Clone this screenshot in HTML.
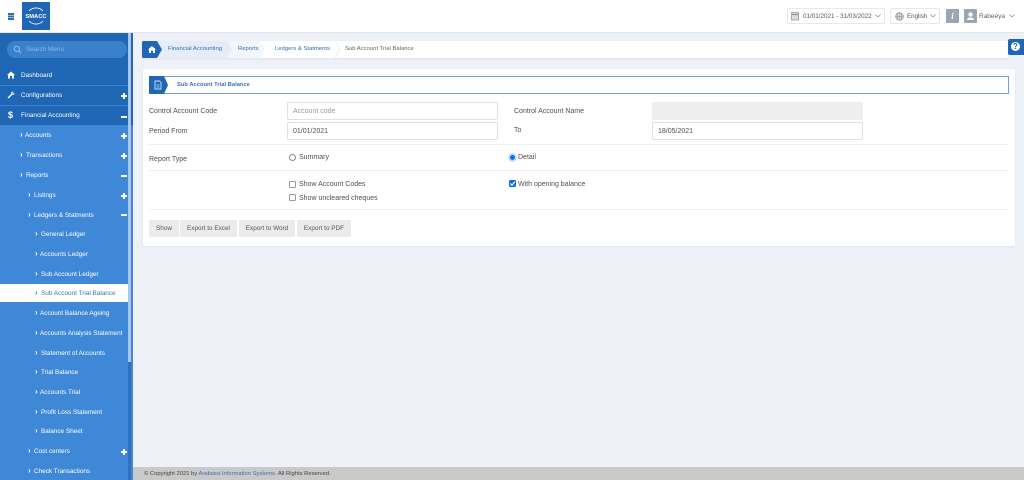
<!DOCTYPE html>
<html><head><meta charset="utf-8"><style>
*{box-sizing:border-box}
html,body{margin:0;padding:0;width:1024px;height:480px;overflow:hidden;background:#eef1f7;font-family:"Liberation Sans",sans-serif}
#w{position:absolute;left:0;top:0;width:1024px;height:480px;overflow:hidden;filter:blur(.3px)}
.a{position:absolute}
.t{position:absolute;white-space:nowrap;line-height:14px}
.side{color:#fff;font-size:6.4px}
.c{color:#fff;font-size:8px;font-weight:700}
.lab{color:#505050;font-size:7px;margin-top:1px}
.inp{position:absolute;background:#fff;border:1px solid #e0e0e0;border-radius:2px;height:18px;font-size:7px;color:#505050;line-height:17px;padding-left:5px}
.btn{position:absolute;top:220px;height:17px;background:#ebebeb;color:#555;font-size:6.4px;line-height:17px;text-align:center;border-radius:1px}
.hr{position:absolute;left:149px;width:860px;height:1px;background:#f0f0f0}
.div{position:absolute;left:0;width:128px;height:1px;background:#3b80cc}
.pm{position:absolute;left:121px;width:6px;height:2px;background:#fff}
.pv{position:absolute;left:123px;width:2px;height:6px;background:#fff}
.cb{position:absolute;width:7px;height:7px;border:1px solid #999;border-radius:1.5px;background:#fff}
.bc{position:absolute;white-space:nowrap;line-height:14px;font-size:5.9px;color:#2f6fb4}
</style></head><body><div id="w">
<div class="a" style="left:0;top:0;width:1024px;height:33px;background:#fff;border-bottom:1px solid #e3e6ee"></div>
<div class="a" style="left:8px;top:13px;width:6px;height:1.5px;background:#2b6cb5;box-shadow:0 2.5px 0 #2b6cb5,0 5px 0 #2b6cb5"></div>
<div class="a" style="left:22px;top:2px;width:28px;height:28px;background:#1f67b5"></div>
<svg class="a" style="left:22px;top:2px" width="28" height="28"><path d="M7 9A9.500 9.500 0 0 1 21 9M7 19A9.500 9.500 0 0 0 21 19" fill="none" stroke="#fff" stroke-width=".8"/><text x="14" y="16.200" text-anchor="middle" font-family="Liberation Sans" font-size="5.800" font-weight="700" fill="#fff">SMACC</text></svg>

<div class="a" style="left:787px;top:8px;width:98px;height:16px;background:#fff;border:1px solid #e8e8e8;border-radius:2px"></div>
<svg class="a" style="left:791px;top:11px" width="9" height="10"><rect x=".5" y="1.500" width="7" height="7.500" fill="#ddd" stroke="#999" stroke-width=".8"/><path d="M1 3.500H7" stroke="#888"/></svg>
<div class="t" style="left:803px;top:9.500px;font-size:6.300px;color:#555">01/01/2021 - 31/03/2022</div>
<svg class="a" style="left:875px;top:14px" width="6" height="4"><path d="M.5 .5L3 3 5.500 .5" fill="none" stroke="#888" stroke-width=".7"/></svg>
<div class="a" style="left:890px;top:8px;width:50px;height:16px;background:#fff;border:1px solid #e8e8e8;border-radius:2px"></div>
<svg class="a" style="left:895px;top:12px" width="9" height="9"><circle cx="4.500" cy="4.500" r="3.800" fill="#ddd" stroke="#888" stroke-width=".7"/><path d="M.7 4.500H8.300M4.500 .7V8.300M2.800 1.200Q1.800 4.500 2.800 7.800M6.200 1.200Q7.200 4.500 6.200 7.800" fill="none" stroke="#888" stroke-width=".5"/></svg>
<div class="t" style="left:907px;top:9.500px;font-size:6.200px;color:#555">English</div>
<svg class="a" style="left:930px;top:14px" width="6" height="4"><path d="M.5 .5L3 3 5.500 .5" fill="none" stroke="#888" stroke-width=".7"/></svg>
<div class="a" style="left:946px;top:9px;width:13px;height:14px;background:#9ba6b5;border-radius:1px;color:#fff;font:italic 700 9px/14px 'Liberation Serif',serif;text-align:center">i</div>
<div class="a" style="left:964px;top:9px;width:13px;height:14px;background:#9ba6b5;border-radius:1px"></div>
<svg class="a" style="left:964px;top:9px" width="13" height="14"><circle cx="6.500" cy="5.500" r="2.200" fill="#fff"/><path d="M3 11Q3 8.500 6.500 8.500T10 11Z" fill="#fff"/></svg>
<div class="t" style="left:979px;top:9.500px;font-size:6.500px;color:#666">Rabeeya</div>
<svg class="a" style="left:1009px;top:14px" width="6" height="4"><path d="M.5 .5L3 3 5.500 .5" fill="none" stroke="#888" stroke-width=".7"/></svg>

<div class="a" style="left:0;top:33px;width:133px;height:447px;background:#3f88d8"></div>
<div class="a" style="left:0;top:33px;width:133px;height:92px;background:#1f67b5"></div>
<div class="a" style="left:128px;top:33px;width:3px;height:329px;background:#a9c7ea"></div>
<div class="a" style="left:128px;top:362px;width:3px;height:118px;background:#2f71bd"></div>
<div class="a" style="left:7px;top:41px;width:120px;height:17px;border-radius:9px;background:#3b80cc"></div>
<svg class="a" style="left:13px;top:45px" width="9" height="9"><circle cx="3.800" cy="3.800" r="2.600" fill="none" stroke="#9cc3ee" stroke-width=".9"/><path d="M5.800 5.800L8 8" stroke="#9cc3ee"/></svg>
<div class="t" style="left:26px;top:43px;font-size:6.400px;color:#8db9ea">Search Menu</div>

<svg class="a" style="left:7px;top:71px" width="8" height="8"><path d="M0 4L4 .5 8 4 7 4V7.500H5V5H3V7.500H1V4Z" fill="#fff"/></svg>
<div class="t side" style="left:21px;top:69px">Dashboard</div>
<div class="div" style="top:85px"></div>
<svg class="a" style="left:7px;top:91px" width="8" height="8"><path d="M.5 6.500L4 3Q3.800 1 5.800 .6L6.500 .7 5 2.200 5.800 3 7.300 1.500Q7.800 4.300 5 4L1.700 7.500Z" fill="#fff"/></svg>
<div class="t side" style="left:21px;top:89px">Configurations</div>
<div class="pm" style="top:95px"></div><div class="pv" style="top:93px"></div>
<div class="div" style="top:105px"></div>
<div class="t" style="left:8px;top:108px;font-size:9px;font-weight:700;color:#fff">$</div>
<div class="t side" style="left:21px;top:109px">Financial Accounting</div>
<div class="pm" style="top:116px"></div>

<div class="t c" style="left:20px;top:128px">›</div><div class="t side" style="left:25px;top:129px">Accounts</div>
<div class="pm" style="top:135px"></div><div class="pv" style="top:133px"></div>
<div class="t c" style="left:20px;top:148px">›</div><div class="t side" style="left:26px;top:149px">Transactions</div>
<div class="pm" style="top:155px"></div><div class="pv" style="top:153px"></div>
<div class="t c" style="left:20px;top:168px">›</div><div class="t side" style="left:26px;top:169px">Reports</div>
<div class="pm" style="top:175px"></div>
<div class="t c" style="left:28px;top:188px">›</div><div class="t side" style="left:34px;top:189px">Listings</div>
<div class="pm" style="top:195px"></div><div class="pv" style="top:193px"></div>
<div class="t c" style="left:28px;top:208px">›</div><div class="t side" style="left:34px;top:209px">Ledgers &amp; Statments</div>
<div class="pm" style="top:214px"></div>
<div class="t c" style="left:35px;top:227px">›</div><div class="t side" style="left:41px;top:228px">General Ledger</div>
<div class="t c" style="left:35px;top:247px">›</div><div class="t side" style="left:40px;top:248px">Accounts Ledger</div>
<div class="t c" style="left:35px;top:267px">›</div><div class="t side" style="left:41px;top:268px">Sub Account Ledger</div>
<div class="a" style="left:0;top:284px;width:128px;height:18px;background:#fff"></div>
<div class="t c" style="left:35px;top:286px;color:#4a7fbd">›</div><div class="t side" style="left:41px;top:287px;color:#3f78b8">Sub Account Trial Balance</div>
<div class="t c" style="left:35px;top:306px">›</div><div class="t side" style="left:40px;top:307px">Account Balance Ageing</div>
<div class="t c" style="left:35px;top:326px">›</div><div class="t side" style="left:40px;top:327px">Accounts Analysis Statement</div>
<div class="t c" style="left:35px;top:346px">›</div><div class="t side" style="left:41px;top:347px">Statement of Accounts</div>
<div class="t c" style="left:35px;top:365px">›</div><div class="t side" style="left:41px;top:366px">Trial Balance</div>
<div class="t c" style="left:35px;top:385px">›</div><div class="t side" style="left:40px;top:386px">Accounts Trial</div>
<div class="t c" style="left:35px;top:405px">›</div><div class="t side" style="left:41px;top:406px">Profit Loss Statement</div>
<div class="t c" style="left:35px;top:424px">›</div><div class="t side" style="left:41px;top:425px">Balance Sheet</div>
<div class="t c" style="left:28px;top:444px">›</div><div class="t side" style="left:34px;top:445px">Cost centers</div>
<div class="pm" style="top:451px"></div><div class="pv" style="top:449px"></div>
<div class="t c" style="left:28px;top:464px">›</div><div class="t side" style="left:34px;top:465px">Check Transactions</div>

<div class="a" style="left:142px;top:41px;width:866px;height:17px;background:#fff;box-shadow:0 1px 2px #e0e3ea"></div>
<svg class="a" style="left:142px;top:41px" width="300" height="17">
<path d="M80 0H118L123 8.500 118 17H80Z" fill="#f3f6fb"/>
<path d="M0 0H85L90 8.500 85 17H0Z" fill="#e6edf8"/>
<path d="M0 1.500Q0 0 1.500 0H15L20 8.500 15 17H1.500Q0 17 0 15.500Z" fill="#1f67b5"/>
<path d="M6 8.500L10 5 14 8.500 13 8.500V12H11V9.800H9V12H7V8.500Z" fill="#fff"/>
<path d="M193 0L198 8.500 193 17" fill="none" stroke="#eceff5"/>
</svg>
<div class="bc" style="left:168px;top:42px">Financial Accounting</div>
<div class="bc" style="left:238px;top:42px">Reports</div>
<div class="bc" style="left:275px;top:42px">Ledgers &amp; Statments</div>
<div class="bc" style="left:345px;top:42px;color:#666">Sub Account Trial Balance</div>
<div class="a" style="left:1008px;top:39px;width:16px;height:16px;background:#1f67b5;border-radius:2px 0 0 2px"></div>
<div class="a" style="left:1011px;top:42px;width:9px;height:9px;border-radius:50%;background:#fff;color:#1f67b5;font:700 8px/9px 'Liberation Sans',sans-serif;text-align:center">?</div>

<div class="a" style="left:143px;top:69px;width:872px;height:177px;background:#fff;border-radius:2px;box-shadow:0 1px 2px #dfe2e9"></div>
<div class="a" style="left:149px;top:76px;width:860px;height:18px;background:#fff;border:1px solid #6f9fd8;border-left:none"></div>
<svg class="a" style="left:149px;top:76px" width="22" height="18"><path d="M0 1.500Q0 0 1.500 0H15L19 9 15 18H1.500Q0 18 0 16.500Z" fill="#1f67b5"/><path d="M6 5H10.500L12 6.500V13H6Z" fill="none" stroke="#cfe0f5" stroke-width=".9"/><path d="M7.500 9H10.500M7.500 11H10.500" stroke="#cfe0f5" stroke-width=".7"/></svg>
<div class="t" style="left:177px;top:78px;font-size:5.800px;font-weight:700;color:#3d72b5">Sub Account Trial Balance</div>

<div class="t lab" style="left:149px;top:104px">Control Account Code</div>
<div class="inp" style="left:287px;top:102px;width:211px;color:#999">Account code</div>
<div class="t lab" style="left:514px;top:104px">Control Account Name</div>
<div class="a" style="left:652px;top:102px;width:211px;height:18px;background:#eee;border-radius:2px"></div>
<div class="t lab" style="left:149px;top:124px">Period From</div>
<div class="inp" style="left:287px;top:122px;width:211px">01/01/2021</div>
<div class="t lab" style="left:514px;top:123px">To</div>
<div class="inp" style="left:652px;top:122px;width:211px">18/05/2021</div>
<div class="hr" style="top:144px"></div>
<div class="t lab" style="left:149px;top:152px">Report Type</div>
<div class="a" style="left:289px;top:154px;width:7px;height:7px;border:1px solid #888;border-radius:50%;background:#fff"></div>
<div class="t lab" style="left:299px;top:150px">Summary</div>
<div class="a" style="left:509px;top:154px;width:7px;height:7px;border-radius:50%;background:#0b6ff0;box-shadow:0 0 0 .5px #8dbcf5;border:1.500px solid #cfe2fb"></div>
<div class="t lab" style="left:518px;top:150px">Detail</div>
<div class="hr" style="top:170px"></div>
<div class="cb" style="left:289px;top:181px"></div>
<div class="t lab" style="left:299px;top:177px">Show Account Codes</div>
<div class="cb" style="left:509px;top:180px;background:#0b6ff0;border-color:#0b6ff0"></div>
<svg class="a" style="left:509px;top:180px" width="7" height="7"><path d="M1.300 3.500L3 5.200 5.800 1.800" fill="none" stroke="#fff" stroke-width="1.200"/></svg>
<div class="t lab" style="left:518px;top:177px">With opening balance</div>
<div class="cb" style="left:289px;top:194px"></div>
<div class="t lab" style="left:299px;top:191px">Show uncleared cheques</div>
<div class="hr" style="top:209px"></div>
<div class="btn" style="left:149px;width:30px">Show</div>
<div class="btn" style="left:180px;width:57px">Export to Excel</div>
<div class="btn" style="left:239px;width:56px">Export to Word</div>
<div class="btn" style="left:297px;width:54px">Export to PDF</div>

<div class="a" style="left:133px;top:467px;width:891px;height:13px;background:#c9c9c9"></div>
<div class="t" style="left:144px;top:467px;font-size:5.830px;color:#444">© Copyright 2021 by <span style="color:#3f6fb0">Arabsea Information Systems.</span> All Rights Reserved.</div>
</div></body></html>
